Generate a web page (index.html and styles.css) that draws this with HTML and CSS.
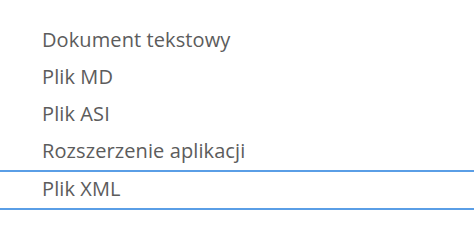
FILE: index.html
```html
<!DOCTYPE html>
<html lang="pl">
  <head>
    <meta charset="UTF-8" />
    <meta name="viewport" content="width=device-width, initial-scale=1.0" />
    <title>Typ pliku</title>
    <link rel="stylesheet" href="styles.css">
  </head>
  <body>
    <ul class="menu">
      <li class="menu-item">Dokument tekstowy</li>
      <li class="menu-item">Plik MD</li>
      <li class="menu-item">Plik ASI</li>
      <li class="menu-item">Rozszerzenie aplikacji</li>
      <li class="menu-item selected">Plik XML</li>
    </ul>
  </body>
</html>
```

FILE: styles.css
```css
body {
  background-color: #ffffff;
  color: #5c5c5c;
  font-family: "Open Sans", Arial, sans-serif;
  margin: 0;
}
.menu {
  list-style: none;
  margin: 0;
  padding: 22px 0 0 0;
}
.menu-item {
  height: 37px;
  line-height: 36px;
  padding-left: 42px;
  font-size: 20px;
  letter-spacing: 0.1px;
}
.menu-item.selected {
  height: 36px;
  line-height: 34px;
  border-top: 2px solid #5a9ee6;
  border-bottom: 2px solid #5a9ee6;
}
```
